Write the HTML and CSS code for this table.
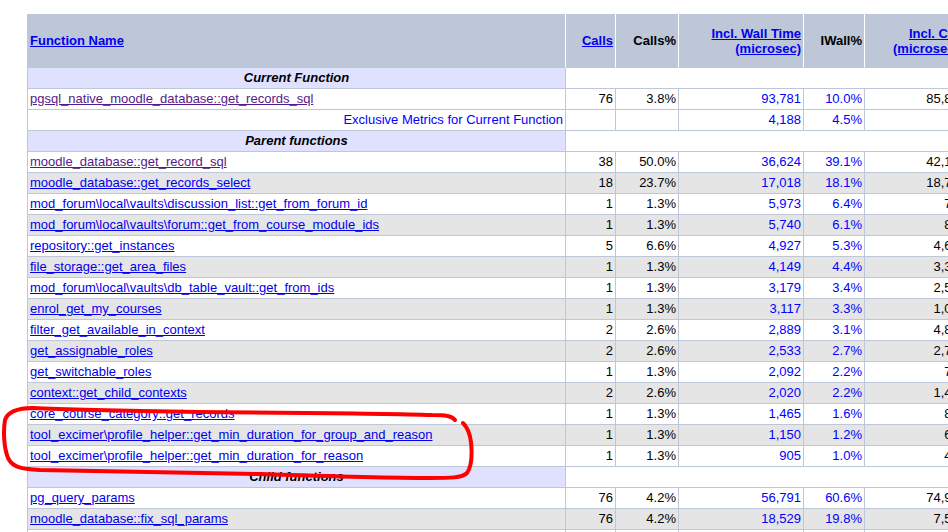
FILE: index.html
```html
<!DOCTYPE html>
<html>
<head>
<meta charset="utf-8">
<title>XHProf: Hierarchical Profiler Report</title>
<link rel="stylesheet" href="styles.css">
</head>
<body>
<div class="page">
<table class="xh">
<thead>
<tr>
<th class="c-fn"><a href="#">Function Name</a></th>
<th class="c-ct"><a href="#">Calls</a></th>
<th class="c-ctp">Calls%</th>
<th class="c-wt"><a href="#">Incl. Wall Time<br>(microsec)</a></th>
<th class="c-wtp">IWall%</th>
<th class="c-cpu"><a href="#">Incl. CPU<br>(microsecs)</a></th>
</tr>
</thead>
<tbody>
<tr class="section"><td class="sec-title">Current Function</td><td class="sec-rest" colspan="5"></td></tr>
<tr><td class="fn"><a class="visited" href="#">pgsql_native_moodle_database::get_records_sql</a></td><td>76</td><td>3.8%</td><td class="sorted">93,781</td><td class="sorted">10.0%</td><td>85,812</td></tr>
<tr><td class="excl">Exclusive Metrics for Current Function</td><td></td><td></td><td class="sorted">4,188</td><td class="sorted">4.5%</td><td></td></tr>
<tr class="section"><td class="sec-title">Parent functions</td><td class="sec-rest" colspan="5"></td></tr>
<tr><td class="fn"><a class="visited" href="#">moodle_database::get_record_sql</a></td><td>38</td><td>50.0%</td><td class="sorted">36,624</td><td class="sorted">39.1%</td><td>42,154</td></tr>
<tr class="alt"><td class="fn"><a href="#">moodle_database::get_records_select</a></td><td>18</td><td>23.7%</td><td class="sorted">17,018</td><td class="sorted">18.1%</td><td>18,742</td></tr>
<tr><td class="fn"><a href="#">mod_forum\local\vaults\discussion_list::get_from_forum_id</a></td><td>1</td><td>1.3%</td><td class="sorted">5,973</td><td class="sorted">6.4%</td><td>772</td></tr>
<tr class="alt"><td class="fn"><a href="#">mod_forum\local\vaults\forum::get_from_course_module_ids</a></td><td>1</td><td>1.3%</td><td class="sorted">5,740</td><td class="sorted">6.1%</td><td>846</td></tr>
<tr><td class="fn"><a href="#">repository::get_instances</a></td><td>5</td><td>6.6%</td><td class="sorted">4,927</td><td class="sorted">5.3%</td><td>4,618</td></tr>
<tr class="alt"><td class="fn"><a href="#">file_storage::get_area_files</a></td><td>1</td><td>1.3%</td><td class="sorted">4,149</td><td class="sorted">4.4%</td><td>3,321</td></tr>
<tr><td class="fn"><a href="#">mod_forum\local\vaults\db_table_vault::get_from_ids</a></td><td>1</td><td>1.3%</td><td class="sorted">3,179</td><td class="sorted">3.4%</td><td>2,547</td></tr>
<tr class="alt"><td class="fn"><a href="#">enrol_get_my_courses</a></td><td>1</td><td>1.3%</td><td class="sorted">3,117</td><td class="sorted">3.3%</td><td>1,032</td></tr>
<tr><td class="fn"><a href="#">filter_get_available_in_context</a></td><td>2</td><td>2.6%</td><td class="sorted">2,889</td><td class="sorted">3.1%</td><td>4,816</td></tr>
<tr class="alt"><td class="fn"><a href="#">get_assignable_roles</a></td><td>2</td><td>2.6%</td><td class="sorted">2,533</td><td class="sorted">2.7%</td><td>2,764</td></tr>
<tr><td class="fn"><a href="#">get_switchable_roles</a></td><td>1</td><td>1.3%</td><td class="sorted">2,092</td><td class="sorted">2.2%</td><td>735</td></tr>
<tr class="alt"><td class="fn"><a href="#">context::get_child_contexts</a></td><td>2</td><td>2.6%</td><td class="sorted">2,020</td><td class="sorted">2.2%</td><td>1,402</td></tr>
<tr><td class="fn"><a href="#">core_course_category::get_records</a></td><td>1</td><td>1.3%</td><td class="sorted">1,465</td><td class="sorted">1.6%</td><td>835</td></tr>
<tr class="alt"><td class="fn"><a href="#">tool_excimer\profile_helper::get_min_duration_for_group_and_reason</a></td><td>1</td><td>1.3%</td><td class="sorted">1,150</td><td class="sorted">1.2%</td><td>651</td></tr>
<tr><td class="fn"><a href="#">tool_excimer\profile_helper::get_min_duration_for_reason</a></td><td>1</td><td>1.3%</td><td class="sorted">905</td><td class="sorted">1.0%</td><td>412</td></tr>
<tr class="section"><td class="sec-title">Child functions</td><td class="sec-rest" colspan="5"></td></tr>
<tr><td class="fn"><a href="#">pg_query_params</a></td><td>76</td><td>4.2%</td><td class="sorted">56,791</td><td class="sorted">60.6%</td><td>74,918</td></tr>
<tr class="alt"><td class="fn"><a href="#">moodle_database::fix_sql_params</a></td><td>76</td><td>4.2%</td><td class="sorted">18,529</td><td class="sorted">19.8%</td><td>7,536</td></tr>
<tr><td class="fn"><a href="#">moodle_database::query_start</a></td><td>76</td><td>4.2%</td><td class="sorted">5,112</td><td class="sorted">5.5%</td><td>4,207</td></tr>
</tbody>
</table>
<svg class="annot" width="948" height="532" viewBox="0 0 948 532" xmlns="http://www.w3.org/2000/svg">
<path d="M455 420 C452 416 446 415 432 415 C380 413 300 413 200 412 C130 411 70 410 33 408 C18 408 8 411 5 420 C3 432 4 448 8 458 C12 466 18 469 40 470 C100 471 180 472 260 474 C320 476 380 478 430 478 C450 478 462 478 467 473 C472 466 472 452 471 442 C470 434 467 427 463 423" fill="none" stroke="#ff0000" stroke-width="4" stroke-linecap="round" stroke-linejoin="round"/>
</svg>
</div>
</body>
</html>
```

FILE: styles.css
```css
html, body {
  margin: 0;
  padding: 0;
  overflow: hidden;
  background: #ffffff;
}

body {
  font-family: "Liberation Sans", Arial, sans-serif;
  font-size: 13px;
  color: #000000;
}

.page {
  position: relative;
  width: 948px;
  height: 532px;
  padding: 14px 0 0 27px;
  box-sizing: border-box;
}

a {
  color: #0000ee;
  text-decoration: underline;
}

a.visited {
  color: #551a8b;
}

.xh {
  border-collapse: separate;
  border-spacing: 0;
  table-layout: fixed;
  width: 942px;
  box-sizing: border-box;
  border-left: 1px solid #bdc7d8;
}

.xh th,
.xh td {
  box-sizing: border-box;
  padding: 2px;
  border-right: 1px solid #bdc7d8;
  border-bottom: 1px solid #bdc7d8;
  line-height: 16px;
  white-space: nowrap;
  text-align: right;
  overflow: hidden;
}

.xh th {
  background: #bdc7d8;
  border-right-color: #ffffff;
  height: 54px;
  font-weight: bold;
  line-height: 15px;
  vertical-align: middle;
}

.xh th.c-fn {
  text-align: left;
}

.c-fn { width: 538px; }
.c-ct { width: 50px; }
.c-ctp { width: 63px; }
.c-wt { width: 125px; }
.c-wtp { width: 61px; }
.c-cpu { width: 104px; }

.xh tr.alt td {
  background: #e5e5e5;
}

.xh td.fn {
  text-align: left;
}

.xh td.excl {
  color: #0000ff;
}

.xh td.sorted {
  color: #0000ff;
}

.xh tr.section td.sec-title {
  background: #e0e0ff;
  text-align: center;
  font-weight: bold;
  font-style: italic;
}

.xh tr.section td.sec-rest {
  background: #ffffff;
  border-right: none;
}

.annot {
  position: absolute;
  left: 0;
  top: 0;
  pointer-events: none;
}
```
